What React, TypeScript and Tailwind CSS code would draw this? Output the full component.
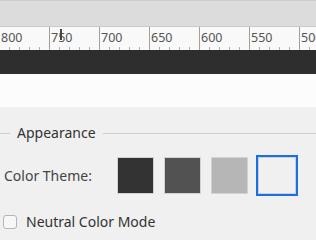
const labels = ['800', '750', '700', '650', '600', '550', '500'];

const themes = [
  { bg: 'bg-[#333333]', selected: false },
  { bg: 'bg-[#525252]', selected: false },
  { bg: 'bg-[#b6b6b6]', selected: false },
  { bg: 'bg-[#f0f0f0]', selected: true },
];

function Ruler() {
  return (
    <div className="relative h-[24px] overflow-hidden border-t border-[#c9c9c9] bg-[#f9f9f9]">
      <div className="ml-[-1px] flex h-full">
        {labels.map((l) => (
          <div key={l} className="flex h-full w-[50px] shrink-0 flex-col border-l border-[#a0a0a0]">
            <span className="pl-[1px] pt-[3px] text-[12.5px] leading-[16px] text-[#555]">{l}</span>
            <div className="mt-auto ml-[9px] flex gap-[9px]">
              {[0, 1, 2, 3].map((i) => (
                <div key={i} className="h-[3px] w-px bg-[#b0b0b0]" />
              ))}
            </div>
          </div>
        ))}
      </div>
      <div className="absolute left-[60px] top-[2px] h-[11px] w-[2px] bg-[#444]" />
    </div>
  );
}

export default function App() {
  return (
    <div className="flex h-[240px] w-[316px] flex-col overflow-hidden bg-[#f0f0f0] font-['Noto_Sans',sans-serif] text-[#333]">
      <div className="h-[26px] border-t border-[#cdcdcd] bg-[#dcdcdc]" />
      <Ruler />
      <div className="h-[24px] bg-[#2e2e2e]" />
      <div className="h-[33px] bg-[#fcfcfc]" />

      <div className="flex flex-col pt-[16px]">
        <div className="flex items-center">
          <div className="h-px w-[10px] bg-[#cfcfcf]" />
          <span className="px-[7px] text-[14px] leading-[20px]">Appearance</span>
          <div className="h-px flex-1 bg-[#cfcfcf]" />
        </div>

        <div className="mt-[12px] flex items-center pl-[4px]">
          <span className="w-[113px] text-[14px] leading-[20px] text-[#444]">Color Theme:</span>
          <div className="flex items-center gap-[10px]">
            {themes.map((t, i) =>
              t.selected ? (
                <div key={i} className="ml-[-2px] border-2 border-[#1a6ee8]">
                  <div className={`h-[37px] w-[38px] border border-[#cfcfcf] ${t.bg}`} />
                </div>
              ) : (
                <div key={i} className={`h-[37px] w-[37px] border border-[#d2d2d2] ${t.bg}`} />
              )
            )}
          </div>
        </div>

        <label className="mt-[16px] flex items-center gap-[9px] pl-[3px]">
          <span className="h-[14px] w-[14px] rounded-[3px] border border-[#b5b5b5] bg-[#f7f7f7]" />
          <span className="text-[14px] leading-[20px] text-[#333]">Neutral Color Mode</span>
        </label>
      </div>
    </div>
  );
}
